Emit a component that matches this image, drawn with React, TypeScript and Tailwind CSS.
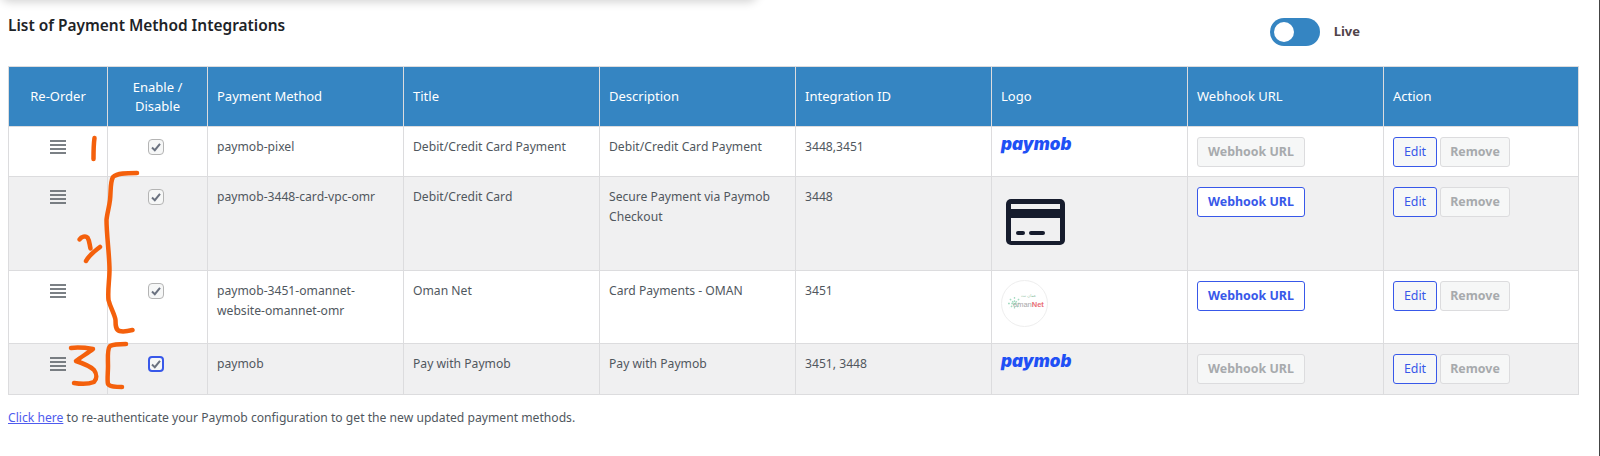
import React from 'react';

const font = 'font-["Noto_Sans","Open_Sans",sans-serif]';

const Grip = () => (
  <svg width="16" height="14" viewBox="0 0 16 14" className="mx-auto block">
    <path d="M0 1h16M0 5h16M0 9h16M0 13h16" stroke="#50575e" strokeWidth="1.7" />
  </svg>
);

const Check = ({ active }: { active?: boolean }) => (
  <span
    className={`ml-[40px] flex h-4 w-4 items-center justify-center rounded-[4px] bg-[#f6f7f7] ${
      active ? 'border-2 border-[#3858e9]' : 'border-[1.5px] border-[#b4b4b4]'
    }`}
  >
    <svg width="12" height="12" viewBox="0 0 12 12">
      <path d="M2 6.500 4.800 9.200 10 2.800" fill="none" stroke="#6b7280" strokeWidth="2" />
    </svg>
  </span>
);

const PaymobLogo = () => (
  <span className='block text-[17px] leading-[18px] font-black italic tracking-[0.1px] text-[#1f50f5] font-["Inter",sans-serif]'>
    paymob
  </span>
);

const CardLogo = () => (
  <svg width="64" height="64" viewBox="0 0 64 64" className="mt-[4px] block">
    <rect x="5" y="10" width="59" height="46" rx="5" fill="#161c2d" />
    <rect x="10" y="15" width="49" height="5" fill="#f0f0f1" />
    <rect x="10" y="29" width="49" height="23" fill="#f0f0f1" />
    <rect x="15" y="42" width="9" height="4" rx="2" fill="#161c2d" />
    <rect x="28" y="42" width="16" height="4" rx="2" fill="#161c2d" />
  </svg>
);

const OmanLogo = () => (
  <span className="relative mt-[1px] flex h-[47px] w-[47px] items-center justify-center rounded-full border border-[#eeeeee] bg-white">
    <svg width="13" height="13" viewBox="0 0 14 14" className="absolute left-[6px] top-[16px]">
      <path d="M7 0v14M0 7h14M2 2l10 10M12 2 2 12" stroke="#a5dcc2" strokeWidth="1.4" strokeDasharray="2 1.500" />
    </svg>
    <span className='absolute left-[19px] top-[13px] text-[4px] leading-none text-[#8fbf9f] font-["DejaVu_Sans",sans-serif]'>عمان نت</span>
    <span className='absolute left-[11px] top-[20px] text-[7.5px] leading-none font-["Liberation_Sans",sans-serif]'>
      <span className="text-[#a8a8a8]">oman</span>
      <span className="font-bold text-[#ea7078]">Net</span>
    </span>
  </span>
);

const WebhookBtn = ({ active }: { active?: boolean }) => (
  <button
    className={`h-[30px] w-[108px] rounded-[3px] border text-[12.4px] font-bold ${
      active ? 'border-[#3858e9] bg-white text-[#3858e9]' : 'border-[#dcdcde] bg-[#f6f7f7] text-[#a7aaad]'
    }`}
  >
    Webhook URL
  </button>
);

const Actions = () => (
  <div className="flex gap-[3px]">
    <button className="h-[30px] w-[44px] rounded-[3px] border border-[#3858e9] bg-[#f6f7f7] text-[12.4px] text-[#3858e9]">Edit</button>
    <button className="h-[30px] w-[70px] rounded-[3px] border border-[#dcdcde] bg-[#f6f7f7] text-[12.4px] font-bold text-[#a7aaad]">Remove</button>
  </div>
);

const rows = [
  { method: 'paymob-pixel', title: 'Debit/Credit Card Payment', desc: 'Debit/Credit Card Payment', id: '3448,3451', logo: <PaymobLogo />, hook: false, h: 'h-[50px]', bg: 'bg-white' },
  { method: 'paymob-3448-card-vpc-omr', title: 'Debit/Credit Card', desc: 'Secure Payment via Paymob Checkout', id: '3448', logo: <CardLogo />, hook: true, h: 'h-[94px]', bg: 'bg-[#f0f0f1]' },
  { method: 'paymob-3451-omannet-website-omannet-omr', title: 'Oman Net', desc: 'Card Payments - OMAN', id: '3451', logo: <OmanLogo />, hook: true, h: 'h-[73px]', bg: 'bg-white' },
  { method: 'paymob', title: 'Pay with Paymob', desc: 'Pay with Paymob', id: '3451, 3448', logo: <PaymobLogo />, hook: false, h: 'h-[51px]', bg: 'bg-[#f0f0f1]', active: true },
];

const th = 'border border-[#dcdcde] text-[13px] font-normal leading-[19px] text-white';
const thLeft = `${th} px-[9px] text-left`;
const thCenter = `${th} px-[9px] text-center`;
const td = 'border border-[#dcdcde] align-top text-[12.15px] leading-[20px] text-[#50575e]';
const tdText = `${td} px-[9px] pt-[10px]`;

export default function App() {
  return (
    <div className={`relative h-[456px] w-[1600px] overflow-hidden bg-white ${font}`}>
      {/* bar cut off at the top of the capture */}
      <div className="absolute -top-[20px] left-0 h-[20px] w-[758px] rounded-[10px] bg-white shadow-[0_2px_10px_rgba(0,0,0,0.18)]" />
      <div className="absolute right-0 top-0 h-full w-px bg-[#444444]" />

      <div className="px-2">
        <div className="flex h-[66px] items-start justify-between">
          <h2 className="mt-[14px] text-[15.45px] font-semibold leading-[22px] text-[#1d2327]">List of Payment Method Integrations</h2>
          <div className="mr-[232px] mt-[18px] flex items-center gap-[14px]">
            <span className="flex h-[28px] w-[50px] items-center rounded-full bg-[#3585c2] pl-[4px]">
              <span className="h-[20px] w-[20px] rounded-full bg-white" />
            </span>
            <span className="text-[13px] font-bold text-[#50444a]">Live</span>
          </div>
        </div>

        <table className="w-[1570px] table-fixed border-collapse border border-[#dcdcde]">
          <colgroup>
            <col className="w-[99px]" />
            <col className="w-[100px]" />
            <col className="w-[196px]" />
            <col className="w-[196px]" />
            <col className="w-[196px]" />
            <col className="w-[196px]" />
            <col className="w-[196px]" />
            <col className="w-[196px]" />
            <col className="w-[195px]" />
          </colgroup>
          <thead>
            <tr className="h-[60px] bg-[#3585c2]">
              <th className={thCenter}>Re-Order</th>
              <th className={thCenter}>Enable / Disable</th>
              <th className={thLeft}>Payment Method</th>
              <th className={thLeft}>Title</th>
              <th className={thLeft}>Description</th>
              <th className={thLeft}>Integration ID</th>
              <th className={thLeft}>Logo</th>
              <th className={thLeft}>Webhook URL</th>
              <th className={thLeft}>Action</th>
            </tr>
          </thead>
          <tbody>
            {rows.map((r) => (
              <tr key={r.method} className={`${r.h} ${r.bg}`}>
                <td className={`${td} pt-[13px]`}><Grip /></td>
                <td className={`${td} pt-[12px]`}><Check active={r.active} /></td>
                <td className={tdText}>{r.method}</td>
                <td className={tdText}>{r.title}</td>
                <td className={tdText}>{r.desc}</td>
                <td className={tdText}>{r.id}</td>
                <td className={`${td} px-[9px] pt-[8px]`}>{r.logo}</td>
                <td className={tdText}><WebhookBtn active={r.hook} /></td>
                <td className={tdText}><Actions /></td>
              </tr>
            ))}
          </tbody>
        </table>

        <p className="mt-[13px] text-[12.15px] leading-[20px] text-[#50575e]">
          <a href="#" className="text-[#4f5bee] underline">Click here</a> to re-authenticate your Paymob configuration to get the new updated payment methods.
        </p>
      </div>

      {/* hand-drawn marks on top of the screenshot */}
      <svg width="1600" height="456" className="pointer-events-none absolute left-0 top-0" fill="none" stroke="#f4600c" strokeWidth="4.500" strokeLinecap="round" strokeLinejoin="round">
        <path d="M94.500 138c-1 7-1 14-1 21" />
        <path d="M137 173c-10 0-20 0-24 4-3 5-2 15-3 23-1 8-3 14-3.500 20 0 15 3 35 3 50 0 10-2 20-1 30 2 8 6 14 7 20 0 5 0 10 4 11 4 1 9 0 13-1" />
        <path d="M79.500 239.500c2-3 6-4 8-2 2 3 2 7 3 11" />
        <path d="M100 247c-5 4-11 8-14 14" />
        <path d="M71 348c7-1 16 0 22 1-5 4-12 8-17 12 6 2 14 5 18 9 3 4 3 9 0 12-5 2-14 2-20 1" />
        <path d="M126 344c-6 0-12 0-16 2-3 3-2 12-2 20 0 7-1 14 0 18 2 3 8 3 14 3" />
      </svg>
    </div>
  );
}
